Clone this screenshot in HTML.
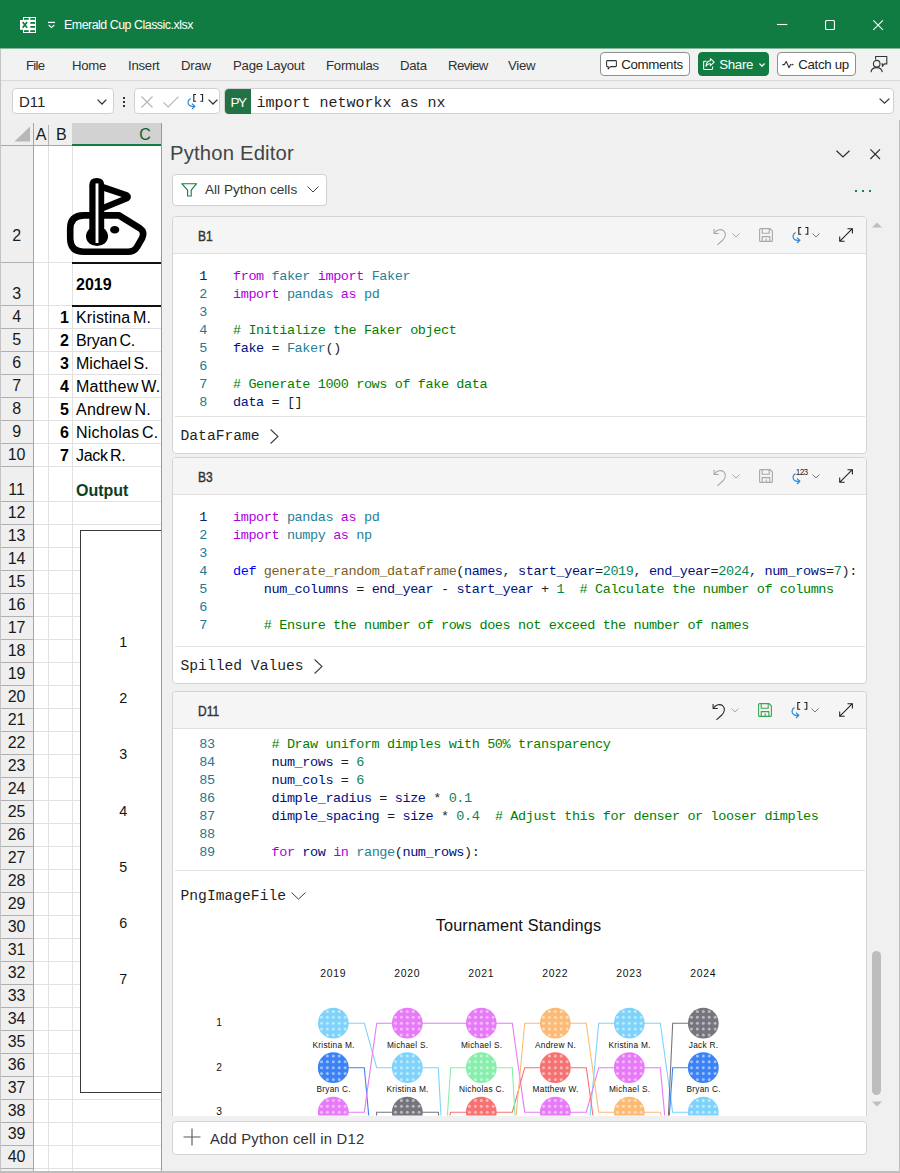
<!DOCTYPE html>
<html>
<head>
<meta charset="utf-8">
<title>Emerald Cup Classic.xlsx</title>
<style>
*{box-sizing:border-box;margin:0;padding:0}
html,body{width:900px;height:1173px;overflow:hidden;background:#f0f0f0}
body{font-family:"Liberation Sans",sans-serif;color:#242424;position:relative}
#root{position:absolute;left:0;top:0;width:900px;height:1173px;overflow:hidden;background:#f0f0f0}
.abs{position:absolute}
svg{position:absolute;overflow:visible}
/* title bar */
#title{left:0;top:0;width:900px;height:49px;background:linear-gradient(#107c41 0,#107c41 48px,#82b99b 48px,#82b99b 49px)}
#title .name{left:64px;top:17px;font-size:12.4px;color:#fff;line-height:16px;white-space:nowrap;letter-spacing:-0.48px}
/* ribbon */
#ribbon{left:0;top:49px;width:900px;height:32px;background:#f2f2f2;border-bottom:1px solid #d9d9d9;box-shadow:0 1px 2px rgba(0,0,0,0.08)}
.tab{top:9px;letter-spacing:-0.25px;font-size:13.2px;line-height:16px;color:#303030;white-space:nowrap}
.rbtn{top:3px;height:24px;border:1px solid #8f8f8f;border-radius:4px;background:#fff}
.rtxt{top:8px;font-size:13.3px;line-height:16px;letter-spacing:-0.35px;white-space:nowrap;color:#242424}
/* formula bar */
#fbar{left:0;top:81px;width:900px;height:42px;background:#f0f0f0}
.box{background:#fff;border:1px solid #d1d1d1;border-radius:4px}
/* sheet */
#sheet{left:0;top:123px;width:161px;height:1050px;background:#fff}
.colh{top:125px;font-size:16px;line-height:19px;text-align:center;color:#1a1a1a}
.rn{left:0.6px;width:32px;text-align:center;font-size:16px;line-height:20px;color:#1a1a1a}
.rh{left:5px;width:29px;background:#efefef;border-bottom:1px solid #b4b4b4;border-right:1px solid #b4b4b4;font-size:16.5px;color:#262626;text-align:center}
.rh span{position:absolute;left:0;width:28px;bottom:1px;line-height:19px}
.gl{background:#e1e1e1}
.cell{font-size:16px;line-height:23px;white-space:nowrap;color:#000}
/* panel */
#panel{left:162px;top:123px;width:738px;height:1050px;background:#f0f0f0}
.card{background:#fff;border:1px solid #e0e0e0;border-radius:4px;overflow:hidden}
.chead{left:0;top:0;width:100%;height:36px;background:#f5f5f5;border-bottom:1px solid #e3e3e3}

.code{font-family:"Liberation Mono",monospace;font-size:13.5px;letter-spacing:-0.4px;line-height:18px;white-space:pre;color:#1f1f1f}
.ln{font-family:"Liberation Mono",monospace;font-size:13.5px;letter-spacing:-0.4px;line-height:18px;white-space:pre;color:#237893}
.out{font-family:"Liberation Mono",monospace;font-size:14.66px;line-height:18px;white-space:pre;color:#1f1f1f}
.k{color:#af00db}.m{color:#267f99}.c{color:#008000}.v{color:#001080}.n{color:#098658}.f{color:#795e26}.b{color:#0000ff}
</style>
</head>
<body>
<div id="root">
<!-- TITLE BAR -->
<div id="title" class="abs">
  <svg style="left:20px;top:17px" width="16" height="16" viewBox="0 0 16 16">
    <rect x="3" y="0" width="13" height="16" fill="#fff"/><rect x="4" y="1" width="4.7" height="1.8" fill="#107c41"/><rect x="4" y="5" width="4.7" height="1.8" fill="#107c41"/><rect x="4" y="9" width="4.7" height="1.8" fill="#107c41"/><rect x="4" y="13.2" width="4.7" height="1.8" fill="#107c41"/><rect x="10.3" y="1" width="4.7" height="1.8" fill="#107c41"/><rect x="10.3" y="5" width="4.7" height="1.8" fill="#107c41"/><rect x="10.3" y="9" width="4.7" height="1.8" fill="#107c41"/><rect x="10.3" y="13.2" width="4.7" height="1.8" fill="#107c41"/>
    <rect x="0" y="3" width="9.3" height="9.8" fill="#fff"/>
    <path d="M2.7 5l4.4 5.8M7.1 5l-4.4 5.8" stroke="#107c41" stroke-width="1.7" fill="none"/>
  </svg>
  <svg style="left:48px;top:21px" width="8" height="8" viewBox="0 0 8 8">
    <path d="M0 1.4h7" stroke="#fff" stroke-width="1.3" fill="none"/>
    <path d="M0.7 4l2.8 2.6l2.8 -2.6" stroke="#fff" stroke-width="1.1" fill="none"/>
  </svg>
  <div class="abs name">Emerald Cup Classic.xlsx</div>
  <svg style="left:777px;top:18px" width="12" height="12" viewBox="0 0 12 12"><path d="M0 6.5h10.3" stroke="#fff" stroke-width="1.1"/></svg>
  <svg style="left:825px;top:20px" width="10" height="10" viewBox="0 0 10 10"><rect x="0.55" y="0.55" width="8.9" height="8.9" rx="1" fill="none" stroke="#fff" stroke-width="1.1"/></svg>
  <svg style="left:873px;top:20px" width="10" height="10" viewBox="0 0 10 10"><path d="M0.3 0.3l9.6 9.6M9.9 0.3l-9.6 9.6" stroke="#fff" stroke-width="1.1"/></svg>
</div>

<!-- RIBBON TABS -->
<div id="ribbon" class="abs">
  <div class="abs tab" style="left:26px;letter-spacing:-0.7px">File</div>
  <div class="abs tab" style="left:72px">Home</div>
  <div class="abs tab" style="left:128px">Insert</div>
  <div class="abs tab" style="left:181px">Draw</div>
  <div class="abs tab" style="left:233px">Page Layout</div>
  <div class="abs tab" style="left:326px">Formulas</div>
  <div class="abs tab" style="left:400px">Data</div>
  <div class="abs tab" style="left:448px;letter-spacing:-0.6px">Review</div>
  <div class="abs tab" style="left:508px">View</div>
  <div class="abs rbtn" style="left:600px;width:90px"></div>
  <div class="abs rbtn" style="left:698px;width:71px;background:#107c41;border-color:#107c41"></div>
  <div class="abs rbtn" style="left:777px;width:79px"></div>
  <div class="abs rtxt" style="left:621.3px">Comments</div>
  <div class="abs rtxt" style="left:719.3px;color:#fff">Share</div>
  <div class="abs rtxt" style="left:798.3px">Catch up</div>
  <svg style="left:605.5px;top:10.5px" width="11" height="10" viewBox="0 0 11 10"><path d="M1.4 0.6H9.6Q10.4 0.6 10.4 1.4V5.8Q10.4 6.6 9.6 6.6H4.6L2.2 9V6.6H1.4Q0.6 6.6 0.6 5.8V1.4Q0.6 0.6 1.4 0.6Z" fill="none" stroke="#333" stroke-width="1.05" stroke-linejoin="round"/></svg>
  <svg style="left:703px;top:9px" width="12" height="12" viewBox="0 0 12 12"><path d="M3.6 3.2H1.6Q0.6 3.2 0.6 4.2V10.4Q0.6 11.4 1.6 11.4H8.6Q9.6 11.4 9.6 10.4V8.6" fill="none" stroke="#fff" stroke-width="1.05"/><path d="M7.4 0.7L11.2 4.2L7.4 7.7V5.7C5.4 5.5 3.9 6.4 3 8.4C3.2 5.2 4.8 3.1 7.4 2.8Z" fill="none" stroke="#fff" stroke-width="1.05" stroke-linejoin="round"/></svg>
  <svg style="left:759px;top:14px" width="6" height="4" viewBox="0 0 6 4"><path d="M0.4 0.5L3 3.1L5.6 0.5" fill="none" stroke="#fff" stroke-width="1.2"/></svg>
  <svg style="left:782px;top:10px" width="13" height="11" viewBox="0 0 13 11"><path d="M0.3 5.6H2.4L4.2 2.4L7 8.8L8.6 5.6H9.6" fill="none" stroke="#333" stroke-width="1.1" stroke-linejoin="round"/><circle cx="10.8" cy="5.6" r="0.8" fill="#333"/></svg>
  <svg style="left:870px;top:6px" width="18" height="19" viewBox="0 0 18 19"><circle cx="6.7" cy="8.7" r="3.3" fill="none" stroke="#333" stroke-width="1.1"/><path d="M1 17.2C1.4 13.6 3.6 12.6 6.7 12.6C9.8 12.6 11.8 13.8 12.3 17.2" fill="none" stroke="#333" stroke-width="1.1"/><path d="M5.6 4.4V1.5H16.8V8.9H14.4L12.4 11.4V8.9H11.4" fill="none" stroke="#333" stroke-width="1.1" stroke-linejoin="round"/></svg>
</div>

<!-- FORMULA BAR -->
<div id="fbar" class="abs">
  <div class="abs box" style="left:12px;top:7px;width:102px;height:26px"></div>
  <div class="abs" style="left:19px;top:12px;font-size:15px;line-height:18px">D11</div>
  <div class="abs box" style="left:134px;top:7px;width:86px;height:26px"></div>
  <div class="abs box" style="left:224px;top:7px;width:670px;height:26px"></div>
  <div class="abs" style="left:225px;top:8px;width:26px;height:25px;background:#217346;border-radius:4px 0 0 4px;color:#fff;font-size:13.5px;line-height:27px;text-align:center;letter-spacing:-1.4px;padding-right:0px">PY</div>
  <div class="abs" style="left:256.5px;top:14px;font-family:'Liberation Mono',monospace;font-size:15px;line-height:18px;white-space:pre;color:#1f1f1f">import networkx as nx</div>
  <svg style="left:97px;top:18px" width="10" height="6" viewBox="0 0 10 6"><path d="M0.6 0.6L5 5L9.4 0.6" fill="none" stroke="#333" stroke-width="1.3"/></svg>
  <div class="abs" style="left:122.7px;top:16px;width:2px;height:2px;background:#333"></div><div class="abs" style="left:122.7px;top:20px;width:2px;height:2px;background:#333"></div><div class="abs" style="left:122.7px;top:24px;width:2px;height:2px;background:#333"></div>
  <svg style="left:141px;top:14.5px" width="12" height="12" viewBox="0 0 12 12"><path d="M0.5 0.5L11.5 11.5M11.5 0.5L0.5 11.5" fill="none" stroke="#b4b4b4" stroke-width="1.1"/></svg>
  <svg style="left:163px;top:14.5px" width="16" height="12" viewBox="0 0 16 12"><path d="M0.5 6.4L5.2 11L15.5 0.6" fill="none" stroke="#b4b4b4" stroke-width="1.1"/></svg>
  <svg style="left:187px;top:16.5px" width="9" height="12" viewBox="0 0 9 12"><path d="M3.6 0.5C0.6 2 0.2 5.6 2.6 7.6C3.8 8.5 5.4 8.6 7.4 8.3" fill="none" stroke="#2b88d8" stroke-width="1.2"/><path d="M5 5.6L7.8 8.3L5 11" fill="none" stroke="#2b88d8" stroke-width="1.2"/></svg>
  <svg style="left:193px;top:12.5px" width="11" height="8" viewBox="0 0 11 8"><path d="M3 0.5H0.8V7.3H3M7.4 0.5H9.6V7.3H7.4" fill="none" stroke="#1f1f1f" stroke-width="1.1"/></svg>
  <svg style="left:208px;top:18px" width="10" height="6" viewBox="0 0 10 6"><path d="M0.6 0.6L5 5L9.4 0.6" fill="none" stroke="#333" stroke-width="1.3"/></svg>
  <svg style="left:879px;top:17px" width="11" height="6" viewBox="0 0 11 6"><path d="M0.6 0.6L5.5 5.2L10.4 0.6" fill="none" stroke="#333" stroke-width="1.3"/></svg>
</div>

<!-- SHEET -->
<div id="sheet" class="abs"></div>
<div class="abs" style="left:0;top:123px;width:34px;height:1050px;background:#efefef"></div>
<div class="abs" style="left:0;top:49px;width:1px;height:1124px;background:#c4c4c4"></div>
<div class="abs" style="left:1px;top:123px;width:160px;height:23px;background:#efefef;border-bottom:1px solid #a6a6a6"></div>
<svg style="left:14px;top:126px" width="16" height="16" viewBox="0 0 16 16"><path d="M16 0.5V15.5H0.5z" fill="#b8b8b8"/></svg>
<div class="abs" style="left:33px;top:123px;width:1px;height:1050px;background:#a6a6a6"></div>
<div class="abs" style="left:48px;top:125px;width:1px;height:20px;background:#b4b4b4"></div>
<div class="abs" style="left:72px;top:123px;width:89px;height:23px;background:#d2d2d2;border-bottom:2px solid #107c41"></div>
<div class="abs colh" style="left:34px;width:14px">A</div>
<div class="abs colh" style="left:49.8px;width:23px">B</div>
<div class="abs colh" style="left:135px;width:20px;color:#0e5c2f">C</div>
<div class="abs gl" style="left:48px;top:146px;width:1px;height:1027px"></div>
<div class="abs gl" style="left:72px;top:146px;width:1px;height:1027px"></div>
<div class="abs gl" style="left:34px;top:262px;width:127px;height:1px"></div>
<div class="abs" style="left:1px;top:262px;width:32px;height:1px;background:#b0b0b0"></div>
<div class="abs rn" style="top:226px">2</div>
<div class="abs gl" style="left:34px;top:305px;width:127px;height:1px"></div>
<div class="abs" style="left:1px;top:305px;width:32px;height:1px;background:#b0b0b0"></div>
<div class="abs rn" style="top:284px">3</div>
<div class="abs gl" style="left:34px;top:328px;width:127px;height:1px"></div>
<div class="abs" style="left:1px;top:328px;width:32px;height:1px;background:#b0b0b0"></div>
<div class="abs rn" style="top:307px">4</div>
<div class="abs gl" style="left:34px;top:351px;width:127px;height:1px"></div>
<div class="abs" style="left:1px;top:351px;width:32px;height:1px;background:#b0b0b0"></div>
<div class="abs rn" style="top:330px">5</div>
<div class="abs gl" style="left:34px;top:374px;width:127px;height:1px"></div>
<div class="abs" style="left:1px;top:374px;width:32px;height:1px;background:#b0b0b0"></div>
<div class="abs rn" style="top:353px">6</div>
<div class="abs gl" style="left:34px;top:397px;width:127px;height:1px"></div>
<div class="abs" style="left:1px;top:397px;width:32px;height:1px;background:#b0b0b0"></div>
<div class="abs rn" style="top:376px">7</div>
<div class="abs gl" style="left:34px;top:420px;width:127px;height:1px"></div>
<div class="abs" style="left:1px;top:420px;width:32px;height:1px;background:#b0b0b0"></div>
<div class="abs rn" style="top:399px">8</div>
<div class="abs gl" style="left:34px;top:443px;width:127px;height:1px"></div>
<div class="abs" style="left:1px;top:443px;width:32px;height:1px;background:#b0b0b0"></div>
<div class="abs rn" style="top:422px">9</div>
<div class="abs gl" style="left:34px;top:466px;width:127px;height:1px"></div>
<div class="abs" style="left:1px;top:466px;width:32px;height:1px;background:#b0b0b0"></div>
<div class="abs rn" style="top:445px">10</div>
<div class="abs gl" style="left:34px;top:501px;width:127px;height:1px"></div>
<div class="abs" style="left:1px;top:501px;width:32px;height:1px;background:#b0b0b0"></div>
<div class="abs rn" style="top:480px">11</div>
<div class="abs gl" style="left:34px;top:524px;width:127px;height:1px"></div>
<div class="abs" style="left:1px;top:524px;width:32px;height:1px;background:#b0b0b0"></div>
<div class="abs rn" style="top:503px">12</div>
<div class="abs gl" style="left:34px;top:547px;width:127px;height:1px"></div>
<div class="abs" style="left:1px;top:547px;width:32px;height:1px;background:#b0b0b0"></div>
<div class="abs rn" style="top:526px">13</div>
<div class="abs gl" style="left:34px;top:570px;width:127px;height:1px"></div>
<div class="abs" style="left:1px;top:570px;width:32px;height:1px;background:#b0b0b0"></div>
<div class="abs rn" style="top:549px">14</div>
<div class="abs gl" style="left:34px;top:593px;width:127px;height:1px"></div>
<div class="abs" style="left:1px;top:593px;width:32px;height:1px;background:#b0b0b0"></div>
<div class="abs rn" style="top:572px">15</div>
<div class="abs gl" style="left:34px;top:616px;width:127px;height:1px"></div>
<div class="abs" style="left:1px;top:616px;width:32px;height:1px;background:#b0b0b0"></div>
<div class="abs rn" style="top:595px">16</div>
<div class="abs gl" style="left:34px;top:639px;width:127px;height:1px"></div>
<div class="abs" style="left:1px;top:639px;width:32px;height:1px;background:#b0b0b0"></div>
<div class="abs rn" style="top:618px">17</div>
<div class="abs gl" style="left:34px;top:662px;width:127px;height:1px"></div>
<div class="abs" style="left:1px;top:662px;width:32px;height:1px;background:#b0b0b0"></div>
<div class="abs rn" style="top:641px">18</div>
<div class="abs gl" style="left:34px;top:685px;width:127px;height:1px"></div>
<div class="abs" style="left:1px;top:685px;width:32px;height:1px;background:#b0b0b0"></div>
<div class="abs rn" style="top:664px">19</div>
<div class="abs gl" style="left:34px;top:708px;width:127px;height:1px"></div>
<div class="abs" style="left:1px;top:708px;width:32px;height:1px;background:#b0b0b0"></div>
<div class="abs rn" style="top:687px">20</div>
<div class="abs gl" style="left:34px;top:731px;width:127px;height:1px"></div>
<div class="abs" style="left:1px;top:731px;width:32px;height:1px;background:#b0b0b0"></div>
<div class="abs rn" style="top:710px">21</div>
<div class="abs gl" style="left:34px;top:754px;width:127px;height:1px"></div>
<div class="abs" style="left:1px;top:754px;width:32px;height:1px;background:#b0b0b0"></div>
<div class="abs rn" style="top:733px">22</div>
<div class="abs gl" style="left:34px;top:777px;width:127px;height:1px"></div>
<div class="abs" style="left:1px;top:777px;width:32px;height:1px;background:#b0b0b0"></div>
<div class="abs rn" style="top:756px">23</div>
<div class="abs gl" style="left:34px;top:800px;width:127px;height:1px"></div>
<div class="abs" style="left:1px;top:800px;width:32px;height:1px;background:#b0b0b0"></div>
<div class="abs rn" style="top:779px">24</div>
<div class="abs gl" style="left:34px;top:823px;width:127px;height:1px"></div>
<div class="abs" style="left:1px;top:823px;width:32px;height:1px;background:#b0b0b0"></div>
<div class="abs rn" style="top:802px">25</div>
<div class="abs gl" style="left:34px;top:846px;width:127px;height:1px"></div>
<div class="abs" style="left:1px;top:846px;width:32px;height:1px;background:#b0b0b0"></div>
<div class="abs rn" style="top:825px">26</div>
<div class="abs gl" style="left:34px;top:869px;width:127px;height:1px"></div>
<div class="abs" style="left:1px;top:869px;width:32px;height:1px;background:#b0b0b0"></div>
<div class="abs rn" style="top:848px">27</div>
<div class="abs gl" style="left:34px;top:892px;width:127px;height:1px"></div>
<div class="abs" style="left:1px;top:892px;width:32px;height:1px;background:#b0b0b0"></div>
<div class="abs rn" style="top:871px">28</div>
<div class="abs gl" style="left:34px;top:915px;width:127px;height:1px"></div>
<div class="abs" style="left:1px;top:915px;width:32px;height:1px;background:#b0b0b0"></div>
<div class="abs rn" style="top:894px">29</div>
<div class="abs gl" style="left:34px;top:938px;width:127px;height:1px"></div>
<div class="abs" style="left:1px;top:938px;width:32px;height:1px;background:#b0b0b0"></div>
<div class="abs rn" style="top:917px">30</div>
<div class="abs gl" style="left:34px;top:961px;width:127px;height:1px"></div>
<div class="abs" style="left:1px;top:961px;width:32px;height:1px;background:#b0b0b0"></div>
<div class="abs rn" style="top:940px">31</div>
<div class="abs gl" style="left:34px;top:984px;width:127px;height:1px"></div>
<div class="abs" style="left:1px;top:984px;width:32px;height:1px;background:#b0b0b0"></div>
<div class="abs rn" style="top:963px">32</div>
<div class="abs gl" style="left:34px;top:1007px;width:127px;height:1px"></div>
<div class="abs" style="left:1px;top:1007px;width:32px;height:1px;background:#b0b0b0"></div>
<div class="abs rn" style="top:986px">33</div>
<div class="abs gl" style="left:34px;top:1030px;width:127px;height:1px"></div>
<div class="abs" style="left:1px;top:1030px;width:32px;height:1px;background:#b0b0b0"></div>
<div class="abs rn" style="top:1009px">34</div>
<div class="abs gl" style="left:34px;top:1053px;width:127px;height:1px"></div>
<div class="abs" style="left:1px;top:1053px;width:32px;height:1px;background:#b0b0b0"></div>
<div class="abs rn" style="top:1032px">35</div>
<div class="abs gl" style="left:34px;top:1076px;width:127px;height:1px"></div>
<div class="abs" style="left:1px;top:1076px;width:32px;height:1px;background:#b0b0b0"></div>
<div class="abs rn" style="top:1055px">36</div>
<div class="abs gl" style="left:34px;top:1099px;width:127px;height:1px"></div>
<div class="abs" style="left:1px;top:1099px;width:32px;height:1px;background:#b0b0b0"></div>
<div class="abs rn" style="top:1078px">37</div>
<div class="abs gl" style="left:34px;top:1122px;width:127px;height:1px"></div>
<div class="abs" style="left:1px;top:1122px;width:32px;height:1px;background:#b0b0b0"></div>
<div class="abs rn" style="top:1101px">38</div>
<div class="abs gl" style="left:34px;top:1145px;width:127px;height:1px"></div>
<div class="abs" style="left:1px;top:1145px;width:32px;height:1px;background:#b0b0b0"></div>
<div class="abs rn" style="top:1124px">39</div>
<div class="abs gl" style="left:34px;top:1168px;width:127px;height:1px"></div>
<div class="abs" style="left:1px;top:1168px;width:32px;height:1px;background:#b0b0b0"></div>
<div class="abs rn" style="top:1147px">40</div>
<div class="abs gl" style="left:34px;top:1191px;width:127px;height:1px"></div>
<div class="abs" style="left:1px;top:1191px;width:32px;height:1px;background:#b0b0b0"></div>
<div class="abs rn" style="top:1170px">41</div>
<div class="abs" style="left:80px;top:530px;width:90px;height:563px;background:#fff;border:1px solid #3a3a3a"></div>
<div class="abs" style="left:113.3px;top:633px;width:20px;text-align:center;font-size:14.3px;line-height:18px;color:#111">1</div>
<div class="abs" style="left:113.3px;top:689px;width:20px;text-align:center;font-size:14.3px;line-height:18px;color:#111">2</div>
<div class="abs" style="left:113.3px;top:745px;width:20px;text-align:center;font-size:14.3px;line-height:18px;color:#111">3</div>
<div class="abs" style="left:113.3px;top:802px;width:20px;text-align:center;font-size:14.3px;line-height:18px;color:#111">4</div>
<div class="abs" style="left:113.3px;top:858px;width:20px;text-align:center;font-size:14.3px;line-height:18px;color:#111">5</div>
<div class="abs" style="left:113.3px;top:914px;width:20px;text-align:center;font-size:14.3px;line-height:18px;color:#111">6</div>
<div class="abs" style="left:113.3px;top:970px;width:20px;text-align:center;font-size:14.3px;line-height:18px;color:#111">7</div>
<div class="abs" style="left:72px;top:262px;width:89px;height:1.5px;background:#111"></div>
<div class="abs" style="left:72px;top:305px;width:89px;height:1.5px;background:#111"></div>
<div class="abs cell" style="left:76px;top:273px;font-weight:bold">2019</div>
<div class="abs cell" style="left:49px;top:306px;width:20px;text-align:right;font-weight:bold">1</div>
<div class="abs cell" style="left:76px;top:306px;word-spacing:-2px;letter-spacing:0.13px">Kristina M.</div>
<div class="abs cell" style="left:49px;top:329px;width:20px;text-align:right;font-weight:bold">2</div>
<div class="abs cell" style="left:76px;top:329px;word-spacing:-2px;letter-spacing:-0.14px">Bryan C.</div>
<div class="abs cell" style="left:49px;top:352px;width:20px;text-align:right;font-weight:bold">3</div>
<div class="abs cell" style="left:76px;top:352px;word-spacing:-2px;letter-spacing:0px">Michael S.</div>
<div class="abs cell" style="left:49px;top:375px;width:20px;text-align:right;font-weight:bold">4</div>
<div class="abs cell" style="left:76px;top:375px;word-spacing:-2px;letter-spacing:0.29px">Matthew W.</div>
<div class="abs cell" style="left:49px;top:398px;width:20px;text-align:right;font-weight:bold">5</div>
<div class="abs cell" style="left:76px;top:398px;word-spacing:-2px;letter-spacing:0.25px">Andrew N.</div>
<div class="abs cell" style="left:49px;top:421px;width:20px;text-align:right;font-weight:bold">6</div>
<div class="abs cell" style="left:76px;top:421px;word-spacing:-2px;letter-spacing:0.25px">Nicholas C.</div>
<div class="abs cell" style="left:49px;top:444px;width:20px;text-align:right;font-weight:bold">7</div>
<div class="abs cell" style="left:76px;top:444px;word-spacing:-2px;letter-spacing:-0.28px">Jack R.</div>
<div class="abs cell" style="left:76px;top:479px;font-weight:bold;color:#0f3d24">Output</div>
<svg style="left:62px;top:175px" width="90" height="85" viewBox="62 175 90 85">
  <path d="M89 215.4H84Q70.2 215.4 70.2 229V238Q70.2 251.8 84 251.8H128Q134 251.8 137 247L142.2 238Q145 232 140 228.4L119 215.4H105" fill="none" stroke="#000" stroke-width="6.6" stroke-linejoin="round" stroke-linecap="round"/>
  <path d="M104 187.6L126.6 195.2Q129 196.6 126.6 198.4L104 207.6" fill="none" stroke="#000" stroke-width="6.4" stroke-linejoin="round" stroke-linecap="round"/>
  <ellipse cx="97" cy="236.3" rx="11" ry="9.8" fill="#000"/>
  <ellipse cx="114.7" cy="229.7" rx="4.6" ry="3.8" fill="#000"/>
  <path d="M89.3 238V185.2Q89.3 178 96.7 178Q104.2 178 104.2 185.2V238Z" fill="#000"/>
  <path d="M97 183.4V243" stroke="#fff" stroke-width="2.9" fill="none"/>
</svg>
<div class="abs" style="left:161px;top:123px;width:1px;height:1050px;background:#9a9a9a"></div>
<!-- PANEL -->
<div id="panel" class="abs"></div>
<div class="abs" style="left:170px;top:141px;font-size:20.3px;line-height:24px;color:#444;white-space:nowrap;letter-spacing:0.17px">Python Editor</div>
<svg style="left:835.5px;top:150.3px" width="14" height="8" viewBox="0 0 14 8"><path d="M0.5 0.7L7 7L13.5 0.7" fill="none" stroke="#2b2b2b" stroke-width="1.2"/></svg>
<svg style="left:869.7px;top:148.8px" width="10.4" height="10.4" viewBox="0 0 10.4 10.4"><path d="M0.4 0.4L10 10M10 0.4L0.4 10" fill="none" stroke="#2b2b2b" stroke-width="1.15"/></svg>
<div class="abs" style="left:172px;top:174px;width:155px;height:32px;background:#fff;border:1px solid #d1d1d1;border-radius:4px"></div>
<svg style="left:181px;top:183px" width="16" height="15" viewBox="0 0 16 15"><path d="M0.8 0.7H15.6L10.2 7.2V13H6.6V7.2Z" fill="none" stroke="#107c41" stroke-width="1.1" stroke-linejoin="round"/></svg>
<div class="abs" style="left:205px;top:181px;font-size:13.6px;line-height:18px;color:#333;white-space:nowrap">All Python cells</div>
<svg style="left:307px;top:186px" width="12" height="7" viewBox="0 0 12 7"><path d="M0.5 0.5L6 6L11.5 0.5" fill="none" stroke="#444" stroke-width="1"/></svg>
<div class="abs" style="left:854.7px;top:190px;width:2px;height:2px;background:#12806a"></div>
<div class="abs" style="left:861.6px;top:190px;width:2px;height:2px;background:#12806a"></div>
<div class="abs" style="left:868.5px;top:190px;width:2px;height:2px;background:#12806a"></div>
<div class="abs" style="left:172px;top:216px;width:695px;height:238px;background:#fff;border:1px solid #d4d4d4;border-radius:4px"></div>
<div class="abs" style="left:173px;top:217px;width:693px;height:37px;background:#f5f5f5;border-bottom:1px solid #e0e0e0;border-radius:3px 3px 0 0"></div>
<div class="abs" style="left:198.3px;top:229.2px;font-size:13.8px;-webkit-text-stroke:0.4px #333;line-height:16px;color:#333;white-space:nowrap;transform:scaleX(0.87);transform-origin:0 0">B1</div>
<svg style="left:713px;top:228px" width="14" height="18" viewBox="0 0 14 18"><path d="M1.1 1V5.5H5.8" fill="none" stroke="#a8a8a8" stroke-width="1.1"/><path d="M1.4 5.2C3.6 1.8 8 0.4 10.8 2.8C13.4 5.2 12.6 9.2 9.8 12L4.4 16.8" fill="none" stroke="#a8a8a8" stroke-width="1.1"/></svg>
<svg style="left:732px;top:233px" width="8" height="5" viewBox="0 0 8 5"><path d="M0.5 0.5L4 4L7.5 0.5" fill="none" stroke="#a8a8a8" stroke-width="1"/></svg>
<svg style="left:759px;top:228px" width="14" height="14" viewBox="0 0 14 14"><path d="M0.6 1.6Q0.6 0.6 1.6 0.6H11L13.4 3V12.4Q13.4 13.4 12.4 13.4H1.6Q0.6 13.4 0.6 12.4Z" fill="none" stroke="#a8a8a8" stroke-width="1.1"/><path d="M3.2 0.6V5.2H10.2V0.6" fill="none" stroke="#a8a8a8" stroke-width="1.1"/><path d="M3.2 13.4V8.6H10.8V13.4" fill="none" stroke="#a8a8a8" stroke-width="1.1"/><path d="M7.2 10.6V13" fill="none" stroke="#a8a8a8" stroke-width="1.1"/></svg>
<svg style="left:792px;top:232px" width="9" height="12" viewBox="0 0 9 12"><path d="M3.6 0.5C0.6 2 0.2 5.6 2.6 7.6C3.8 8.5 5.4 8.6 7.4 8.3" fill="none" stroke="#2b88d8" stroke-width="1.2"/><path d="M5 5.6L7.8 8.3L5 11" fill="none" stroke="#2b88d8" stroke-width="1.2"/></svg>
<svg style="left:798px;top:227px" width="11" height="8" viewBox="0 0 11 8"><path d="M3.2 0.5H0.8V7.3H3.2M7.4 0.5H9.8V7.3H7.4" fill="none" stroke="#1f1f1f" stroke-width="1.1"/></svg>
<svg style="left:812px;top:233px" width="8" height="5" viewBox="0 0 8 5"><path d="M0.5 0.5L4 4L7.5 0.5" fill="none" stroke="#7a7a7a" stroke-width="1"/></svg>
<svg style="left:839px;top:228.4px" width="14" height="14" viewBox="0 0 14 14"><path d="M0.9 13.1L13.1 0.9M8.5 0.7H13.4V5.6M0.7 8.4V13.3H5.6" fill="none" stroke="#1f1f1f" stroke-width="1.05"/></svg>
<div class="abs ln" style="left:199.3px;top:268px;color:#0b216f">1</div>
<div class="abs code" style="left:233px;top:268px"><span class="k">from</span> <span class="m">faker</span> <span class="k">import</span> <span class="m">Faker</span></div>
<div class="abs ln" style="left:199.3px;top:286px">2</div>
<div class="abs code" style="left:233px;top:286px"><span class="k">import</span> <span class="m">pandas</span> <span class="k">as</span> <span class="m">pd</span></div>
<div class="abs ln" style="left:199.3px;top:304px">3</div>
<div class="abs ln" style="left:199.3px;top:322px">4</div>
<div class="abs code" style="left:233px;top:322px"><span class="c"># Initialize the Faker object</span></div>
<div class="abs ln" style="left:199.3px;top:340px">5</div>
<div class="abs code" style="left:233px;top:340px"><span class="v">fake</span> = <span class="m">Faker</span>()</div>
<div class="abs ln" style="left:199.3px;top:358px">6</div>
<div class="abs ln" style="left:199.3px;top:376px">7</div>
<div class="abs code" style="left:233px;top:376px"><span class="c"># Generate 1000 rows of fake data</span></div>
<div class="abs ln" style="left:199.3px;top:394px">8</div>
<div class="abs code" style="left:233px;top:394px"><span class="v">data</span> = []</div>
<div class="abs" style="left:175px;top:416px;width:690px;height:1px;background:#e3e3e3"></div>
<div class="abs out" style="left:180.5px;top:427.4px">DataFrame</div>
<svg style="left:269.5px;top:428.5px" width="9" height="15" viewBox="0 0 9 15"><path d="M0.6 0.5L8 7.5L0.6 14.5" fill="none" stroke="#3b3b3b" stroke-width="1.05"/></svg>
<div class="abs" style="left:172px;top:457px;width:695px;height:227px;background:#fff;border:1px solid #d4d4d4;border-radius:4px"></div>
<div class="abs" style="left:173px;top:458px;width:693px;height:37px;background:#f5f5f5;border-bottom:1px solid #e0e0e0;border-radius:3px 3px 0 0"></div>
<div class="abs" style="left:198.3px;top:470.2px;font-size:13.8px;-webkit-text-stroke:0.4px #333;line-height:16px;color:#333;white-space:nowrap;transform:scaleX(0.87);transform-origin:0 0">B3</div>
<svg style="left:713px;top:469px" width="14" height="18" viewBox="0 0 14 18"><path d="M1.1 1V5.5H5.8" fill="none" stroke="#a8a8a8" stroke-width="1.1"/><path d="M1.4 5.2C3.6 1.8 8 0.4 10.8 2.8C13.4 5.2 12.6 9.2 9.8 12L4.4 16.8" fill="none" stroke="#a8a8a8" stroke-width="1.1"/></svg>
<svg style="left:732px;top:474px" width="8" height="5" viewBox="0 0 8 5"><path d="M0.5 0.5L4 4L7.5 0.5" fill="none" stroke="#a8a8a8" stroke-width="1"/></svg>
<svg style="left:759px;top:469px" width="14" height="14" viewBox="0 0 14 14"><path d="M0.6 1.6Q0.6 0.6 1.6 0.6H11L13.4 3V12.4Q13.4 13.4 12.4 13.4H1.6Q0.6 13.4 0.6 12.4Z" fill="none" stroke="#a8a8a8" stroke-width="1.1"/><path d="M3.2 0.6V5.2H10.2V0.6" fill="none" stroke="#a8a8a8" stroke-width="1.1"/><path d="M3.2 13.4V8.6H10.8V13.4" fill="none" stroke="#a8a8a8" stroke-width="1.1"/><path d="M7.2 10.6V13" fill="none" stroke="#a8a8a8" stroke-width="1.1"/></svg>
<svg style="left:792px;top:473px" width="9" height="12" viewBox="0 0 9 12"><path d="M3.6 0.5C0.6 2 0.2 5.6 2.6 7.6C3.8 8.5 5.4 8.6 7.4 8.3" fill="none" stroke="#2b88d8" stroke-width="1.2"/><path d="M5 5.6L7.8 8.3L5 11" fill="none" stroke="#2b88d8" stroke-width="1.2"/></svg>
<div class="abs" style="left:795.8px;top:467.2px;font-size:8.3px;line-height:10px;letter-spacing:-0.75px;color:#1f1f1f">123</div>
<svg style="left:812px;top:474px" width="8" height="5" viewBox="0 0 8 5"><path d="M0.5 0.5L4 4L7.5 0.5" fill="none" stroke="#7a7a7a" stroke-width="1"/></svg>
<svg style="left:839px;top:469.4px" width="14" height="14" viewBox="0 0 14 14"><path d="M0.9 13.1L13.1 0.9M8.5 0.7H13.4V5.6M0.7 8.4V13.3H5.6" fill="none" stroke="#1f1f1f" stroke-width="1.05"/></svg>
<div class="abs ln" style="left:199.3px;top:509px;color:#0b216f">1</div>
<div class="abs code" style="left:233px;top:509px"><span class="k">import</span> <span class="m">pandas</span> <span class="k">as</span> <span class="m">pd</span></div>
<div class="abs ln" style="left:199.3px;top:527px">2</div>
<div class="abs code" style="left:233px;top:527px"><span class="k">import</span> <span class="m">numpy</span> <span class="k">as</span> <span class="m">np</span></div>
<div class="abs ln" style="left:199.3px;top:545px">3</div>
<div class="abs ln" style="left:199.3px;top:563px">4</div>
<div class="abs code" style="left:233px;top:563px"><span class="b">def</span> <span class="f">generate_random_dataframe</span>(<span class="v">names</span>, <span class="v">start_year</span>=<span class="n">2019</span>, <span class="v">end_year</span>=<span class="n">2024</span>, <span class="v">num_rows</span>=<span class="n">7</span>):</div>
<div class="abs ln" style="left:199.3px;top:581px">5</div>
<div class="abs code" style="left:233px;top:581px">    <span class="v">num_columns</span> = <span class="v">end_year</span> - <span class="v">start_year</span> + <span class="n">1</span>  <span class="c"># Calculate the number of columns</span></div>
<div class="abs ln" style="left:199.3px;top:599px">6</div>
<div class="abs ln" style="left:199.3px;top:617px">7</div>
<div class="abs code" style="left:233px;top:617px">    <span class="c"># Ensure the number of rows does not exceed the number of names</span></div>
<div class="abs" style="left:175px;top:646px;width:690px;height:1px;background:#e3e3e3"></div>
<div class="abs out" style="left:180.5px;top:657.4px">Spilled Values</div>
<svg style="left:314.3px;top:658.5px" width="9" height="15" viewBox="0 0 9 15"><path d="M0.6 0.5L8 7.5L0.6 14.5" fill="none" stroke="#3b3b3b" stroke-width="1.05"/></svg>
<div class="abs" style="left:172px;top:691px;width:695px;height:425px;background:#fff;border:1px solid #d4d4d4;border-bottom:none;border-radius:4px 4px 0 0"></div>
<div class="abs" style="left:173px;top:692px;width:693px;height:37px;background:#f5f5f5;border-bottom:1px solid #e0e0e0;border-radius:3px 3px 0 0"></div>
<div class="abs" style="left:198.3px;top:704.2px;font-size:13.8px;-webkit-text-stroke:0.4px #333;line-height:16px;color:#333;white-space:nowrap;transform:scaleX(0.87);transform-origin:0 0">D11</div>
<svg style="left:712px;top:703px" width="14" height="18" viewBox="0 0 14 18"><path d="M1.1 1V5.5H5.8" fill="none" stroke="#2b2b2b" stroke-width="1.1"/><path d="M1.4 5.2C3.6 1.8 8 0.4 10.8 2.8C13.4 5.2 12.6 9.2 9.8 12L4.4 16.8" fill="none" stroke="#2b2b2b" stroke-width="1.1"/></svg>
<svg style="left:731px;top:708px" width="8" height="5" viewBox="0 0 8 5"><path d="M0.5 0.5L4 4L7.5 0.5" fill="none" stroke="#a8a8a8" stroke-width="1"/></svg>
<svg style="left:758px;top:703px" width="14" height="14" viewBox="0 0 14 14"><path d="M0.6 1.6Q0.6 0.6 1.6 0.6H11L13.4 3V12.4Q13.4 13.4 12.4 13.4H1.6Q0.6 13.4 0.6 12.4Z" fill="none" stroke="#3aa655" stroke-width="1.1"/><path d="M3.2 0.6V5.2H10.2V0.6" fill="none" stroke="#3aa655" stroke-width="1.1"/><path d="M3.2 13.4V8.6H10.8V13.4" fill="none" stroke="#3aa655" stroke-width="1.1"/><path d="M7.2 10.6V13" fill="none" stroke="#3aa655" stroke-width="1.1"/></svg>
<svg style="left:791px;top:707px" width="9" height="12" viewBox="0 0 9 12"><path d="M3.6 0.5C0.6 2 0.2 5.6 2.6 7.6C3.8 8.5 5.4 8.6 7.4 8.3" fill="none" stroke="#2b88d8" stroke-width="1.2"/><path d="M5 5.6L7.8 8.3L5 11" fill="none" stroke="#2b88d8" stroke-width="1.2"/></svg>
<svg style="left:797px;top:702px" width="11" height="8" viewBox="0 0 11 8"><path d="M3.2 0.5H0.8V7.3H3.2M7.4 0.5H9.8V7.3H7.4" fill="none" stroke="#1f1f1f" stroke-width="1.1"/></svg>
<svg style="left:811px;top:708px" width="8" height="5" viewBox="0 0 8 5"><path d="M0.5 0.5L4 4L7.5 0.5" fill="none" stroke="#7a7a7a" stroke-width="1"/></svg>
<svg style="left:839px;top:703.4px" width="14" height="14" viewBox="0 0 14 14"><path d="M0.9 13.1L13.1 0.9M8.5 0.7H13.4V5.6M0.7 8.4V13.3H5.6" fill="none" stroke="#1f1f1f" stroke-width="1.05"/></svg>
<div class="abs ln" style="left:199.3px;top:736px">83</div>
<div class="abs code" style="left:240.7px;top:736px">    <span class="c"># Draw uniform dimples with 50% transparency</span></div>
<div class="abs ln" style="left:199.3px;top:754px">84</div>
<div class="abs code" style="left:240.7px;top:754px">    <span class="v">num_rows</span> = <span class="n">6</span></div>
<div class="abs ln" style="left:199.3px;top:772px">85</div>
<div class="abs code" style="left:240.7px;top:772px">    <span class="v">num_cols</span> = <span class="n">6</span></div>
<div class="abs ln" style="left:199.3px;top:790px">86</div>
<div class="abs code" style="left:240.7px;top:790px">    <span class="v">dimple_radius</span> = <span class="v">size</span> * <span class="n">0.1</span></div>
<div class="abs ln" style="left:199.3px;top:808px">87</div>
<div class="abs code" style="left:240.7px;top:808px">    <span class="v">dimple_spacing</span> = <span class="v">size</span> * <span class="n">0.4</span>  <span class="c"># Adjust this for denser or looser dimples</span></div>
<div class="abs ln" style="left:199.3px;top:826px">88</div>
<div class="abs ln" style="left:199.3px;top:844px">89</div>
<div class="abs code" style="left:240.7px;top:844px">    <span class="k">for</span> <span class="v">row</span> <span class="k">in</span> <span class="m">range</span>(<span class="v">num_rows</span>):</div>
<div class="abs" style="left:175px;top:870px;width:690px;height:1px;background:#e3e3e3"></div>
<div class="abs out" style="left:180.5px;top:887.4px">PngImageFile</div>
<svg style="left:291px;top:892px" width="15" height="8" viewBox="0 0 15 8"><path d="M0.6 0.6L7.5 7.2L14.4 0.6" fill="none" stroke="#3b3b3b" stroke-width="1"/></svg>
<svg style="left:173px;top:905px" width="693" height="211" viewBox="173 905 693 211"><defs><clipPath id="cc"><rect x="173" y="905" width="693" height="210.5"/></clipPath>
<g id="dm" fill="#fff" fill-opacity="0.5"><circle cx="-11.8" cy="-11.8" r="1.5"/><circle cx="-11.8" cy="-5.9" r="1.5"/><circle cx="-11.8" cy="0.0" r="1.5"/><circle cx="-11.8" cy="5.9" r="1.5"/><circle cx="-11.8" cy="11.8" r="1.5"/><circle cx="-5.9" cy="-11.8" r="1.5"/><circle cx="-5.9" cy="-5.9" r="1.5"/><circle cx="-5.9" cy="0.0" r="1.5"/><circle cx="-5.9" cy="5.9" r="1.5"/><circle cx="-5.9" cy="11.8" r="1.5"/><circle cx="0.0" cy="-11.8" r="1.5"/><circle cx="0.0" cy="-5.9" r="1.5"/><circle cx="0.0" cy="0.0" r="1.5"/><circle cx="0.0" cy="5.9" r="1.5"/><circle cx="0.0" cy="11.8" r="1.5"/><circle cx="5.9" cy="-11.8" r="1.5"/><circle cx="5.9" cy="-5.9" r="1.5"/><circle cx="5.9" cy="0.0" r="1.5"/><circle cx="5.9" cy="5.9" r="1.5"/><circle cx="5.9" cy="11.8" r="1.5"/><circle cx="11.8" cy="-11.8" r="1.5"/><circle cx="11.8" cy="-5.9" r="1.5"/><circle cx="11.8" cy="0.0" r="1.5"/><circle cx="11.8" cy="5.9" r="1.5"/><circle cx="11.8" cy="11.8" r="1.5"/></g>
</defs><g clip-path="url(#cc)">
<text x="518.5" y="930.5" text-anchor="middle" font-family="Liberation Sans, sans-serif" font-size="16.3" letter-spacing="0.13" fill="#111">Tournament Standings</text>
<polyline fill="none" stroke="#7dd3fc" stroke-width="1.1" points="333.3,1023.2 364.3,1023.2 376.7,1067.7 407.3,1067.7 438.3,1067.7 450.7,1290.2 481.3,1290.2 512.3,1290.2 524.7,1156.7 555.3,1156.7 586.3,1156.7 598.7,1023.2 629.3,1023.2 660.3,1023.2 672.7,1112.2 703.3,1112.2"/>
<polyline fill="none" stroke="#3b82f6" stroke-width="1.1" points="333.3,1067.7 364.3,1067.7 376.7,1201.2 407.3,1201.2 438.3,1201.2 450.7,1201.2 481.3,1201.2 512.3,1201.2 524.7,1201.2 555.3,1201.2 586.3,1201.2 598.7,1245.7 629.3,1245.7 660.3,1245.7 672.7,1067.7 703.3,1067.7"/>
<polyline fill="none" stroke="#e879f9" stroke-width="1.1" points="333.3,1112.2 364.3,1112.2 376.7,1023.2 407.3,1023.2 438.3,1023.2 450.7,1023.2 481.3,1023.2 512.3,1023.2 524.7,1112.2 555.3,1112.2 586.3,1112.2 598.7,1067.7 629.3,1067.7 660.3,1067.7 672.7,1201.2 703.3,1201.2"/>
<polyline fill="none" stroke="#f87171" stroke-width="1.1" points="333.3,1156.7 364.3,1156.7 376.7,1156.7 407.3,1156.7 438.3,1156.7 450.7,1112.2 481.3,1112.2 512.3,1112.2 524.7,1067.7 555.3,1067.7 586.3,1067.7 598.7,1156.7 629.3,1156.7 660.3,1156.7 672.7,1245.7 703.3,1245.7"/>
<polyline fill="none" stroke="#fdba74" stroke-width="1.1" points="333.3,1201.2 364.3,1201.2 376.7,1290.2 407.3,1290.2 438.3,1290.2 450.7,1156.7 481.3,1156.7 512.3,1156.7 524.7,1023.2 555.3,1023.2 586.3,1023.2 598.7,1112.2 629.3,1112.2 660.3,1112.2 672.7,1156.7 703.3,1156.7"/>
<polyline fill="none" stroke="#86efac" stroke-width="1.1" points="333.3,1245.7 364.3,1245.7 376.7,1245.7 407.3,1245.7 438.3,1245.7 450.7,1067.7 481.3,1067.7 512.3,1067.7 524.7,1290.2 555.3,1290.2 586.3,1290.2 598.7,1201.2 629.3,1201.2 660.3,1201.2 672.7,1290.2 703.3,1290.2"/>
<polyline fill="none" stroke="#75757d" stroke-width="1.1" points="333.3,1290.2 364.3,1290.2 376.7,1112.2 407.3,1112.2 438.3,1112.2 450.7,1245.7 481.3,1245.7 512.3,1245.7 524.7,1245.7 555.3,1245.7 586.3,1245.7 598.7,1290.2 629.3,1290.2 660.3,1290.2 672.7,1023.2 703.3,1023.2"/>
<text x="333.3" y="976.8" text-anchor="middle" font-family="Liberation Sans, sans-serif" font-size="10.4" letter-spacing="0.75" fill="#111">2019</text>
<circle cx="333.3" cy="1023.2" r="15.4" fill="#7dd3fc"/><clipPath id="c00"><circle cx="333.3" cy="1023.2" r="15.4"/></clipPath><g clip-path="url(#c00)"><use href="#dm" x="333.3" y="1023.2"/></g>
<text x="333.6" y="1047.8" text-anchor="middle" font-family="Liberation Sans, sans-serif" font-size="8.3" letter-spacing="0.27" fill="#111">Kristina M.</text>
<circle cx="333.3" cy="1067.7" r="15.4" fill="#3b82f6"/><clipPath id="c01"><circle cx="333.3" cy="1067.7" r="15.4"/></clipPath><g clip-path="url(#c01)"><use href="#dm" x="333.3" y="1067.7"/></g>
<text x="333.6" y="1092.3" text-anchor="middle" font-family="Liberation Sans, sans-serif" font-size="8.3" letter-spacing="0.27" fill="#111">Bryan C.</text>
<circle cx="333.3" cy="1112.2" r="15.4" fill="#e879f9"/><clipPath id="c02"><circle cx="333.3" cy="1112.2" r="15.4"/></clipPath><g clip-path="url(#c02)"><use href="#dm" x="333.3" y="1112.2"/></g>
<text x="333.6" y="1136.8" text-anchor="middle" font-family="Liberation Sans, sans-serif" font-size="8.3" letter-spacing="0.27" fill="#111">Michael S.</text>
<text x="407.3" y="976.8" text-anchor="middle" font-family="Liberation Sans, sans-serif" font-size="10.4" letter-spacing="0.75" fill="#111">2020</text>
<circle cx="407.3" cy="1023.2" r="15.4" fill="#e879f9"/><clipPath id="c10"><circle cx="407.3" cy="1023.2" r="15.4"/></clipPath><g clip-path="url(#c10)"><use href="#dm" x="407.3" y="1023.2"/></g>
<text x="407.6" y="1047.8" text-anchor="middle" font-family="Liberation Sans, sans-serif" font-size="8.3" letter-spacing="0.27" fill="#111">Michael S.</text>
<circle cx="407.3" cy="1067.7" r="15.4" fill="#7dd3fc"/><clipPath id="c11"><circle cx="407.3" cy="1067.7" r="15.4"/></clipPath><g clip-path="url(#c11)"><use href="#dm" x="407.3" y="1067.7"/></g>
<text x="407.6" y="1092.3" text-anchor="middle" font-family="Liberation Sans, sans-serif" font-size="8.3" letter-spacing="0.27" fill="#111">Kristina M.</text>
<circle cx="407.3" cy="1112.2" r="15.4" fill="#75757d"/><clipPath id="c12"><circle cx="407.3" cy="1112.2" r="15.4"/></clipPath><g clip-path="url(#c12)"><use href="#dm" x="407.3" y="1112.2"/></g>
<text x="407.6" y="1136.8" text-anchor="middle" font-family="Liberation Sans, sans-serif" font-size="8.3" letter-spacing="0.27" fill="#111">Jack R.</text>
<text x="481.3" y="976.8" text-anchor="middle" font-family="Liberation Sans, sans-serif" font-size="10.4" letter-spacing="0.75" fill="#111">2021</text>
<circle cx="481.3" cy="1023.2" r="15.4" fill="#e879f9"/><clipPath id="c20"><circle cx="481.3" cy="1023.2" r="15.4"/></clipPath><g clip-path="url(#c20)"><use href="#dm" x="481.3" y="1023.2"/></g>
<text x="481.6" y="1047.8" text-anchor="middle" font-family="Liberation Sans, sans-serif" font-size="8.3" letter-spacing="0.27" fill="#111">Michael S.</text>
<circle cx="481.3" cy="1067.7" r="15.4" fill="#86efac"/><clipPath id="c21"><circle cx="481.3" cy="1067.7" r="15.4"/></clipPath><g clip-path="url(#c21)"><use href="#dm" x="481.3" y="1067.7"/></g>
<text x="481.6" y="1092.3" text-anchor="middle" font-family="Liberation Sans, sans-serif" font-size="8.3" letter-spacing="0.27" fill="#111">Nicholas C.</text>
<circle cx="481.3" cy="1112.2" r="15.4" fill="#f87171"/><clipPath id="c22"><circle cx="481.3" cy="1112.2" r="15.4"/></clipPath><g clip-path="url(#c22)"><use href="#dm" x="481.3" y="1112.2"/></g>
<text x="481.6" y="1136.8" text-anchor="middle" font-family="Liberation Sans, sans-serif" font-size="8.3" letter-spacing="0.27" fill="#111">Matthew W.</text>
<text x="555.3" y="976.8" text-anchor="middle" font-family="Liberation Sans, sans-serif" font-size="10.4" letter-spacing="0.75" fill="#111">2022</text>
<circle cx="555.3" cy="1023.2" r="15.4" fill="#fdba74"/><clipPath id="c30"><circle cx="555.3" cy="1023.2" r="15.4"/></clipPath><g clip-path="url(#c30)"><use href="#dm" x="555.3" y="1023.2"/></g>
<text x="555.6" y="1047.8" text-anchor="middle" font-family="Liberation Sans, sans-serif" font-size="8.3" letter-spacing="0.27" fill="#111">Andrew N.</text>
<circle cx="555.3" cy="1067.7" r="15.4" fill="#f87171"/><clipPath id="c31"><circle cx="555.3" cy="1067.7" r="15.4"/></clipPath><g clip-path="url(#c31)"><use href="#dm" x="555.3" y="1067.7"/></g>
<text x="555.6" y="1092.3" text-anchor="middle" font-family="Liberation Sans, sans-serif" font-size="8.3" letter-spacing="0.27" fill="#111">Matthew W.</text>
<circle cx="555.3" cy="1112.2" r="15.4" fill="#e879f9"/><clipPath id="c32"><circle cx="555.3" cy="1112.2" r="15.4"/></clipPath><g clip-path="url(#c32)"><use href="#dm" x="555.3" y="1112.2"/></g>
<text x="555.6" y="1136.8" text-anchor="middle" font-family="Liberation Sans, sans-serif" font-size="8.3" letter-spacing="0.27" fill="#111">Michael S.</text>
<text x="629.3" y="976.8" text-anchor="middle" font-family="Liberation Sans, sans-serif" font-size="10.4" letter-spacing="0.75" fill="#111">2023</text>
<circle cx="629.3" cy="1023.2" r="15.4" fill="#7dd3fc"/><clipPath id="c40"><circle cx="629.3" cy="1023.2" r="15.4"/></clipPath><g clip-path="url(#c40)"><use href="#dm" x="629.3" y="1023.2"/></g>
<text x="629.6" y="1047.8" text-anchor="middle" font-family="Liberation Sans, sans-serif" font-size="8.3" letter-spacing="0.27" fill="#111">Kristina M.</text>
<circle cx="629.3" cy="1067.7" r="15.4" fill="#e879f9"/><clipPath id="c41"><circle cx="629.3" cy="1067.7" r="15.4"/></clipPath><g clip-path="url(#c41)"><use href="#dm" x="629.3" y="1067.7"/></g>
<text x="629.6" y="1092.3" text-anchor="middle" font-family="Liberation Sans, sans-serif" font-size="8.3" letter-spacing="0.27" fill="#111">Michael S.</text>
<circle cx="629.3" cy="1112.2" r="15.4" fill="#fdba74"/><clipPath id="c42"><circle cx="629.3" cy="1112.2" r="15.4"/></clipPath><g clip-path="url(#c42)"><use href="#dm" x="629.3" y="1112.2"/></g>
<text x="629.6" y="1136.8" text-anchor="middle" font-family="Liberation Sans, sans-serif" font-size="8.3" letter-spacing="0.27" fill="#111">Andrew N.</text>
<text x="703.3" y="976.8" text-anchor="middle" font-family="Liberation Sans, sans-serif" font-size="10.4" letter-spacing="0.75" fill="#111">2024</text>
<circle cx="703.3" cy="1023.2" r="15.4" fill="#75757d"/><clipPath id="c50"><circle cx="703.3" cy="1023.2" r="15.4"/></clipPath><g clip-path="url(#c50)"><use href="#dm" x="703.3" y="1023.2"/></g>
<text x="703.6" y="1047.8" text-anchor="middle" font-family="Liberation Sans, sans-serif" font-size="8.3" letter-spacing="0.27" fill="#111">Jack R.</text>
<circle cx="703.3" cy="1067.7" r="15.4" fill="#3b82f6"/><clipPath id="c51"><circle cx="703.3" cy="1067.7" r="15.4"/></clipPath><g clip-path="url(#c51)"><use href="#dm" x="703.3" y="1067.7"/></g>
<text x="703.6" y="1092.3" text-anchor="middle" font-family="Liberation Sans, sans-serif" font-size="8.3" letter-spacing="0.27" fill="#111">Bryan C.</text>
<circle cx="703.3" cy="1112.2" r="15.4" fill="#7dd3fc"/><clipPath id="c52"><circle cx="703.3" cy="1112.2" r="15.4"/></clipPath><g clip-path="url(#c52)"><use href="#dm" x="703.3" y="1112.2"/></g>
<text x="703.6" y="1136.8" text-anchor="middle" font-family="Liberation Sans, sans-serif" font-size="8.3" letter-spacing="0.27" fill="#111">Kristina M.</text>
<text x="219.2" y="1026.0" text-anchor="middle" font-family="Liberation Sans, sans-serif" font-size="10.2" fill="#111">1</text>
<text x="219.2" y="1070.5" text-anchor="middle" font-family="Liberation Sans, sans-serif" font-size="10.2" fill="#111">2</text>
<text x="219.2" y="1115.0" text-anchor="middle" font-family="Liberation Sans, sans-serif" font-size="10.2" fill="#111">3</text>
</g></svg>
<div class="abs" style="left:172px;top:1121px;width:695px;height:34px;background:#fff;border:1px solid #d4d4d4;border-radius:4px"></div>
<svg style="left:183px;top:1128px" width="18" height="18" viewBox="0 0 18 18"><path d="M9 0.5V17.5M0.5 9H17.5" fill="none" stroke="#555" stroke-width="1.1"/></svg>
<div class="abs" style="left:210px;top:1129px;font-size:14.8px;line-height:20px;color:#333;white-space:nowrap;letter-spacing:0.21px">Add Python cell in D12</div>
<svg style="left:871.5px;top:222px" width="10" height="6" viewBox="0 0 10 6"><path d="M0 5.5L5 0.5L10 5.5Z" fill="#bdbdbd"/></svg>
<svg style="left:871.5px;top:1101px" width="10" height="6" viewBox="0 0 10 6"><path d="M0 0.5L5 5.5L10 0.5Z" fill="#bdbdbd"/></svg>
<div class="abs" style="left:872px;top:951px;width:9px;height:144px;background:#bdbdbd;border-radius:4.5px"></div>
<div class="abs" style="left:899px;top:120px;width:1px;height:1053px;background:#bdbdbd"></div>
<div class="abs" style="left:0;top:1171px;width:900px;height:2px;background:#bdbdbd"></div>
</div>
</body>
</html>
